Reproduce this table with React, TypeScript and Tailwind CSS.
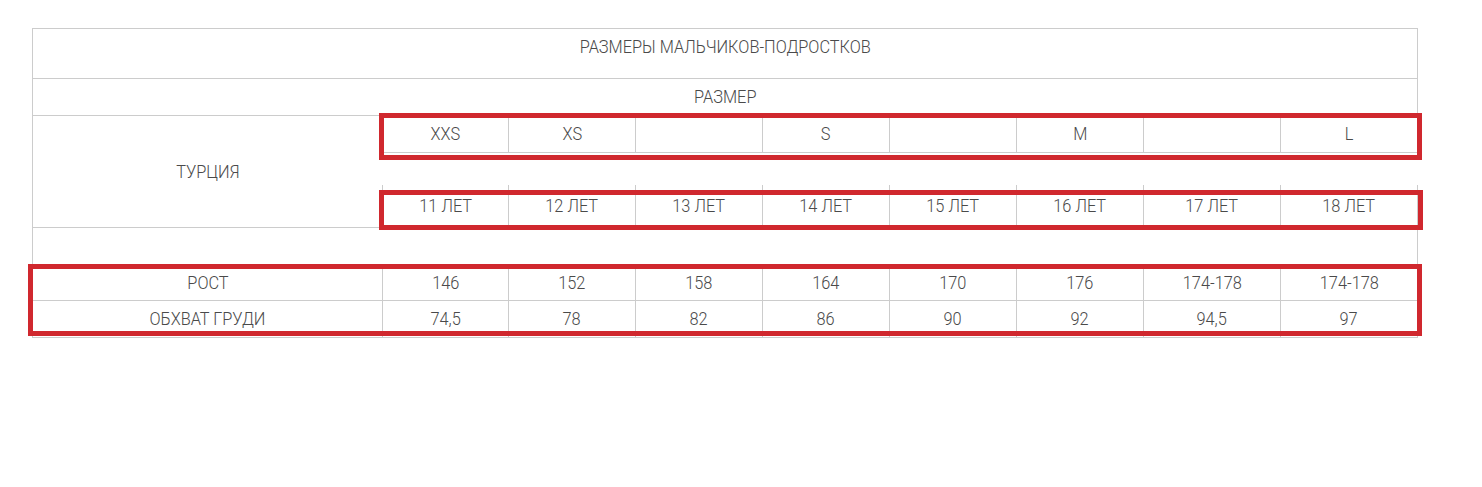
const sizes = ['XXS', 'XS', '', 'S', '', 'M', '', 'L'];
const ages = ['11 ЛЕТ', '12 ЛЕТ', '13 ЛЕТ', '14 ЛЕТ', '15 ЛЕТ', '16 ЛЕТ', '17 ЛЕТ', '18 ЛЕТ'];
const heights = ['146', '152', '158', '164', '170', '176', '174-178', '174-178'];
const chest = ['74,5', '78', '82', '86', '90', '92', '94,5', '97'];

const line = 'border-[#cccccc]';

// narrow text: no condensed face is installed, so squeeze the glyphs
const T = ({ children }: { children: string }) => (
  <span className="inline-block whitespace-nowrap scale-x-[0.86]">{children}</span>
);

const App = () => {
  return (
    <div
      className="relative w-[1482px] h-[487px] bg-white pt-[28px] pl-[32px] text-[19px] font-light text-[#4a4a4a]"
      style={{ fontFamily: 'Roboto, "Liberation Sans", sans-serif' }}
    >
      {/* size chart */}
      <div className="grid w-[1386px] grid-cols-[350px_126px_127px_127px_127px_127px_127px_137px_138px] grid-rows-[50px_37px_38px_32px_42px_37px_36px_38px] leading-[24px]">
        <div className={`col-span-9 border-l border-t border-r ${line} flex justify-center pt-[6px]`}>
          <T>РАЗМЕРЫ МАЛЬЧИКОВ-ПОДРОСТКОВ</T>
        </div>
        <div className={`col-span-9 border-l border-t border-r ${line} flex items-center justify-center`}>
          <T>РАЗМЕР</T>
        </div>

        <div className={`row-span-3 border-l border-t ${line} flex items-center justify-center`}>
          <T>ТУРЦИЯ</T>
        </div>
        {sizes.map((s, i) => (
          <div
            key={'s' + i}
            className={`border-l border-t border-b ${line} ${i === 7 ? 'border-r' : ''} flex items-center justify-center`}
          >
            <T>{s}</T>
          </div>
        ))}
        <div className="col-span-8" />
        {ages.map((a, i) => (
          <div
            key={'a' + i}
            className={`border-l ${line} ${i === 7 ? 'border-r' : ''} flex items-center justify-center`}
          >
            <T>{a}</T>
          </div>
        ))}

        <div className={`col-span-9 border-l border-t border-r ${line}`} />

        <div className={`border-l border-t ${line} flex items-center justify-center`}>
          <T>РОСТ</T>
        </div>
        {heights.map((h, i) => (
          <div
            key={'h' + i}
            className={`border-l border-t ${line} ${i === 7 ? 'border-r' : ''} flex items-center justify-center`}
          >
            <T>{h}</T>
          </div>
        ))}

        <div className={`border-l border-t border-b ${line} flex items-center justify-center`}>
          <T>ОБХВАТ ГРУДИ</T>
        </div>
        {chest.map((c, i) => (
          <div
            key={'c' + i}
            className={`border-l border-t border-b ${line} ${i === 7 ? 'border-r' : ''} flex items-center justify-center`}
          >
            <T>{c}</T>
          </div>
        ))}
      </div>

      {/* red highlight frames drawn over the chart */}
      <div className="absolute left-[379px] top-[113px] w-[1043px] h-[47px] border-[5px] border-[#d0282e]" />
      <div className="absolute left-[379px] top-[190px] w-[1044px] h-[40px] border-[5px] border-[#d0282e]" />
      <div className="absolute left-[28px] top-[264px] w-[1394px] h-[72px] border-[5px] border-[#d0282e]" />
    </div>
  );
};

export default App;
